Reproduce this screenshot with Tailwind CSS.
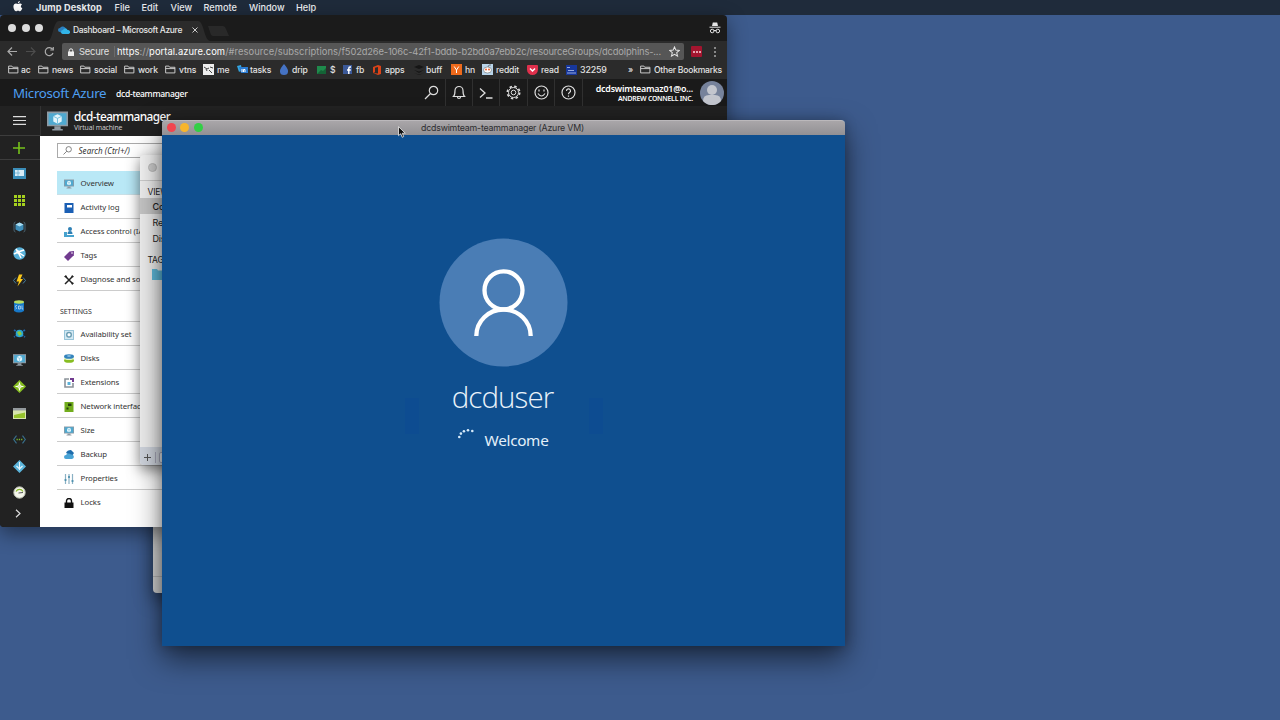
<!DOCTYPE html>
<html lang="en">
  <head>
    <meta charset="UTF-8" />
    <title>Jump Desktop</title>
    <script src="https://cdn.jsdelivr.net/npm/@tailwindcss/browser@4"></script>
  </head>
  <body class="relative w-[1280px] h-[720px] overflow-hidden bg-[#3d5b8d] font-['Inter',sans-serif] text-[9px] whitespace-nowrap">
    <!-- Shared icons -->
    <svg class="hidden">
      <symbol id="folder" viewBox="0 0 12 10"><path d="M.6 8.800V1.200h3.600l.9 1.300h5.800v6.300z M.6 4h10.300" fill="none" stroke="#d8d8d8" stroke-width="1" /></symbol>
      <symbol id="vm" viewBox="0 0 20 18">
        <path d="M0 0h20v14H0z" fill="#8f9aa3" /><path d="M1.500 1.500h17v11h-17z" fill="#4fa9d0" />
        <path d="M7 14h6v2.500h2V18H5v-1.500h2z" fill="#8f9aa3" />
        <path d="M10 2.500l4 2v5l-4 2-4-2v-5z" fill="#e4f5fb" /><path d="M6 4.500l4 2 4-2M10 6.500v5" stroke="#64b7d9" stroke-width=".8" fill="none" />
      </symbol>
    </svg>

    <!-- macOS menu bar -->
    <header class="h-[15px] flex items-center bg-[#1f2b3b] text-[#eef0f3] font-medium text-[9.200px] leading-[15px]">
      <svg class="w-[10px] h-[11px] ml-[13px] mr-[13px] mb-[2px]" viewBox="0 0 20 24" fill="#fff"><path d="M14 0c.2 2.600-1.800 5-4.200 5C9.500 2.500 11.600.3 14 0zM10 6.500c1.200 0 2.400-1.200 4.600-1 1.600.1 3 .8 4 2.200-3.500 2.200-3 6.800.8 8.300-1 3-3 6.500-5.200 6.500-1.700 0-2.200-1-4.200-1s-2.600 1-4.200 1C2.800 22.500 0 17 0 12.500 0 8 2.800 5.600 5.600 5.600c2 0 3.200.9 4.400.9z" /></svg>
      <span class="w-[78.500px] font-bold tracking-[0.1px]">Jump Desktop</span>
      <span class="w-[27px]">File</span>
      <span class="w-[29px]">Edit</span>
      <span class="w-[33px]">View</span>
      <span class="w-[45.500px]">Remote</span>
      <span class="w-[47px] tracking-[-0.05px]">Window</span>
      <span>Help</span>
    </header>

    <!-- Window left behind the others -->
    <div class="absolute left-[153px] top-[400px] w-[200px] h-[193px] rounded-[4px] bg-[#d2d2d2] shadow-[0_6px_18px_rgba(0,0,0,0.5)] flex flex-col justify-end">
      <div class="h-[17px] border-t border-[#b5b5b5]"></div>
    </div>

    <!-- Browser window -->
    <div class="absolute left-0 top-[15px] w-[727px] h-[512px] rounded-[4px] overflow-hidden bg-[#1b1b1b] flex flex-col shadow-[0_6px_20px_rgba(0,0,0,0.45)]">
      <!-- Tabs -->
      <div class="h-[26px] flex items-center text-[#e6e6e6]">
        <div class="flex gap-[5.500px] ml-[8px] w-[44px]">
          <i class="w-[8px] h-[8px] rounded-full bg-[#dcdcdc]"></i><i class="w-[8px] h-[8px] rounded-full bg-[#dcdcdc]"></i><i class="w-[8px] h-[8px] rounded-full bg-[#dcdcdc]"></i>
        </div>
        <div class="relative h-full w-[156px] flex items-center pt-[4px] pl-[6px]">
          <svg class="absolute left-[-4px] top-[6px] w-[162px] h-[20px]" viewBox="0 0 162 20"><path d="M0 20C5 19 5 0 11 0h139c6 0 6 19 12 20z" fill="#2b2b2b" /></svg>
          <svg class="relative w-[12px] h-[9px]" viewBox="0 0 24 18"><path d="M4 12a4 4 0 0 1 0-8 6 6 0 0 1 10-1l5 5-9 8z" fill="#2b7fbf" /><path d="M10 16a4 4 0 0 1 0-8 5 5 0 0 1 9 0 4 4 0 0 1 2 8z" fill="#32b4e8" /></svg>
          <span class="relative ml-[3px] w-[119px] text-[8.500px] font-medium tracking-[-0.33px] word-spacing-normal">Dashboard – Microsoft Azure</span>
          <svg class="relative w-[6px] h-[6px]" viewBox="0 0 6 6"><path d="M.5.5l5 5m0-5l-5 5" stroke="#ccc" /></svg>
        </div>
        <svg class="w-[22px] h-[10px] mt-[6px]" viewBox="0 0 22 10"><path d="M0 0h15q2 0 3 3l3 7H5q-2 0-3-4z" fill="#292929" /></svg>
        <svg class="w-[12px] h-[12px] ml-auto mr-[6px]" viewBox="0 0 12 12" fill="none" stroke="#e5e5e5"><path d="M3 4l.8-3.500h4.400L9 4z" fill="#e5e5e5" stroke="none" /><path d="M.5 5.200h11M5 8.700q1-.8 2 0" /><circle cx="3.200" cy="9" r="1.800" /><circle cx="8.800" cy="9" r="1.800" /></svg>
      </div>
      <!-- Address bar -->
      <div class="h-[21px] flex items-center bg-[#2b2b2b] pl-[7px]">
        <svg class="w-[48px] h-[11px] mr-[7px] shrink-0" viewBox="0 0 48 11" fill="none" stroke="#aaa" stroke-width="1.200"><path d="M10 5.500H1M5 1.500l-4 4 4 4" /><path d="M19 5.500h9M24 1.500l4 4-4 4" stroke="#4d4d4d" /><path d="M45.500 3.200A4 4 0 1 0 46 7M46.300 1v3h-3" /></svg>
        <div class="w-[622px] h-[17px] bg-[#565656] rounded-[2px] flex items-center text-[#a9a9a9] text-[9.400px]">
          <svg class="w-[6px] h-[8px] ml-[6px] mr-[5px]" viewBox="0 0 6 8"><path d="M1.300 4V2.500a1.700 1.700 0 0 1 3.400 0V4" fill="none" stroke="#eee" /><path d="M0 3.500h6V8H0z" fill="#eee" /></svg>
          <span class="w-[35px] pt-px text-[#e0e0e0] tracking-[-0.2px]">Secure</span>
          <span class="w-[3px] h-[11px] border-l border-[#6b6b6b]"></span>
          <span class="w-[552px] pt-px tracking-[0.06px]"><span class="text-white">https</span>://<span class="text-white">portal.azure.com</span>/#resource/subscriptions/<span class="tracking-[-0.16px]">f502d26e-106c-42f1-bddb-b2bd0a7ebb2c/resourceGroups/dcdolphins-...</span></span>
          <svg class="w-[11px] h-[11px]" viewBox="0 0 24 24" fill="none" stroke="#e6e6e6" stroke-width="2.200"><path d="M12 2l3 7 7.500.6-5.700 5 1.800 7.400L12 18l-6.600 4 1.800-7.400-5.700-5L9 9z" /></svg>
        </div>
        <div class="ml-[7px] w-[11px] h-[11px] bg-[#a3152f] rounded-[1px] flex items-center justify-center gap-px"><i class="w-[2px] h-[2px] bg-[#e4a3ae]"></i><i class="w-[2px] h-[2px] bg-[#e4a3ae]"></i><i class="w-[2px] h-[2px] bg-[#e4a3ae]"></i></div>
        <div class="ml-[12px] flex flex-col gap-[2px]"><i class="w-[2px] h-[2px] bg-[#888]"></i><i class="w-[2px] h-[2px] bg-[#888]"></i><i class="w-[2px] h-[2px] bg-[#888]"></i></div>
      </div>
      <!-- Bookmarks -->
      <div class="h-[17px] flex items-center bg-[#2b2b2b] pl-[8px] pb-[1px] text-[#e2e2e2] text-[8.600px] tracking-[-0.16px] font-medium">
        <div class="w-[30px] flex items-center gap-[2px]"><svg class="w-[11px] h-[9px]"><use href="#folder" /></svg>ac</div>
        <div class="w-[42px] flex items-center gap-[3px]"><svg class="w-[11px] h-[9px]"><use href="#folder" /></svg>news</div>
        <div class="w-[44px] flex items-center gap-[3px]"><svg class="w-[11px] h-[9px]"><use href="#folder" /></svg>social</div>
        <div class="w-[41px] flex items-center gap-[3px]"><svg class="w-[11px] h-[9px]"><use href="#folder" /></svg>work</div>
        <div class="w-[38px] flex items-center gap-[3px]"><svg class="w-[11px] h-[9px]"><use href="#folder" /></svg>vtns</div>
        <div class="w-[34px] flex items-center gap-[3px]"><svg class="w-[11px] h-[11px] bg-[#eee]" viewBox="0 0 11 11"><path d="M1 3l3 2 2-1M6 6l3 3M7 3l3 1M3 5l1 2" stroke="#444" fill="none" /></svg>me</div>
        <div class="w-[42px] flex items-center gap-[2px]"><svg class="w-[11px] h-[9px]" viewBox="0 0 11 9"><path d="M0 1l4-1 1 5-3 2z" fill="#33a6e0" /><path d="M2 2h9v6H4z" fill="#2b7cd3" /><path d="M5 4v3M6.500 7V4.500h1.500V7" stroke="#fff" fill="none" /></svg>tasks</div>
        <div class="w-[38px] flex items-center gap-[3px]"><svg class="w-[10px] h-[11px]" viewBox="0 0 10 11"><path d="M5 0q4.500 5 4 7.500A4 3.500 0 0 1 1 7.500Q.5 5 5 0z" fill="#4573c4" /></svg>drip</div>
        <div class="w-[26px] flex items-center gap-[4px]"><svg class="w-[9px] h-[8px]" viewBox="0 0 9 8"><path d="M0 0h9v8H0z" fill="#1f8a4c" /><path d="M0 8l4-4 2 1 3-3v6z" fill="#146336" /></svg>$</div>
        <div class="w-[29px] flex items-center gap-[4px]"><svg class="w-[9px] h-[9px]" viewBox="0 0 9 9"><path d="M0 0h9v9H0z" fill="#3b5998" /><path d="M8 2H7q-1.200 0-1.200 1.300V9M4 5h3.800" fill="none" stroke="#fff" stroke-width="1.400" /></svg>fb</div>
        <div class="w-[42px] flex items-center gap-[3px]"><svg class="w-[10px] h-[10px]" viewBox="0 0 10 10"><path d="M1 2l5-2 3 1v8l-3 1-5-2 5 .5V2L3 2.800v4.500L1 8z" fill="#dc4318" /></svg>apps</div>
        <div class="w-[37px] flex items-center gap-[2px]"><svg class="w-[10px] h-[10px]" viewBox="0 0 10 10" fill="#161616"><path d="M0 2l5-2 5 2-5 2zM0 5l5 1.500L10 5 5 8zM0 8l5 1.500L10 8l-5 2z" /></svg>buff</div>
        <div class="w-[31px] flex items-center gap-[3px]"><svg class="w-[11px] h-[11px]" viewBox="0 0 11 11"><path d="M0 0h11v11H0z" fill="#ee6a1c" /><path d="M3.200 2.500l2.300 3.500 2.300-3.500M5.500 6v3" fill="none" stroke="#fff" /></svg>hn</div>
        <div class="w-[45px] flex items-center gap-[3px]"><svg class="w-[11px] h-[11px]" viewBox="0 0 11 11"><path d="M0 0h11v11H0z" fill="#b8d4ea" /><ellipse cx="5.500" cy="6" rx="4" ry="3" fill="#fff" stroke="#555" stroke-width=".5" /><circle cx="4" cy="5.500" r=".9" fill="#f0501e" /><circle cx="7" cy="5.500" r=".9" fill="#f0501e" /><path d="M6 3l1-2h2" stroke="#444" fill="none" stroke-width=".6" /></svg>reddit</div>
        <div class="w-[39px] flex items-center gap-[3px]"><svg class="w-[11px] h-[10px]" viewBox="0 0 11 10"><path d="M0 1q0-1 1-1h9q1 0 1 1v3.500a5.500 5.500 0 0 1-11 0z" fill="#e0304c" /><path d="M3 3.500l2.500 2.500L8 3.500" fill="none" stroke="#fff" stroke-width="1.500" /></svg>read</div>
        <div class="w-[62px] flex items-center gap-[3px] text-[8.900px]"><svg class="w-[11px] h-[10px]" viewBox="0 0 11 10"><path d="M0 0h11v10H0z" fill="#17379b" /><path d="M1 2.500h3M2 5.500h6M1 8h9" stroke="#b9c6ee" stroke-width=".8" /></svg>32259</div>
        <span class="w-[12px]">»</span>
        <div class="flex items-center gap-[3px] tracking-[-0.25px]"><svg class="w-[11px] h-[9px]"><use href="#folder" /></svg>Other Bookmarks</div>
      </div>

      <!-- Azure top bar -->
      <div class="h-[27px] shrink-0 flex items-center bg-[#1a1a1a] pl-[13px] pr-[3px] text-white font-['Noto_Sans',sans-serif]">
        <span class="w-[103px] pt-[2px] text-[13.300px] tracking-[-0.32px] text-[#4e9ff2]">Microsoft Azure</span>
        <span class="pt-[3px] text-[8.600px] font-medium tracking-[-0.31px]">dcd-teammanager</span>
        <div class="ml-auto flex h-full text-[#ddd]">
          <div class="w-[28px] flex items-center justify-center border-r border-[#303030]"><svg class="w-[15px] h-[15px]" viewBox="0 0 15 15" fill="none" stroke="#ddd" stroke-width="1.200"><circle cx="9.500" cy="5.500" r="4.200" /><path d="M6.500 8.500L1 14" /></svg></div>
          <div class="w-[27px] flex items-center justify-center border-r border-[#303030]"><svg class="w-[14px] h-[15px]" viewBox="0 0 14 15" fill="none" stroke="#ddd" stroke-width="1.200"><path d="M1.500 11.500q1.500-1.500 1.500-6a4 4 0 0 1 8 0q0 4.500 1.500 6zM5.500 12a1.500 1.500 0 0 0 3 0" /></svg></div>
          <div class="w-[27px] flex items-center justify-center border-r border-[#303030]"><svg class="w-[14px] h-[12px]" viewBox="0 0 14 12" fill="none" stroke="#ddd" stroke-width="1.300"><path d="M1 1.500L6 6l-5 4.500M7 11h6.500" /></svg></div>
          <div class="w-[28px] flex items-center justify-center border-r border-[#303030]"><svg class="w-[15px] h-[15px]" viewBox="0 0 15 15" fill="none" stroke="#ddd"><circle cx="7.500" cy="7.500" r="2.300" /><circle cx="7.500" cy="7.500" r="5" /><circle cx="7.500" cy="7.500" r="6.200" stroke-width="1.600" stroke-dasharray="2.500 2.370" /></svg></div>
          <div class="w-[27px] flex items-center justify-center border-r border-[#303030]"><svg class="w-[15px] h-[15px]" viewBox="0 0 15 15" fill="none" stroke="#ddd" stroke-width="1.200"><circle cx="7.500" cy="7.500" r="6.500" /><path d="M4 8.500q3.500 5 7 0M5 4.500v2M10 4.500v2" /></svg></div>
          <div class="w-[28px] flex items-center justify-center border-r border-[#303030]"><svg class="w-[15px] h-[15px]" viewBox="0 0 15 15" fill="none" stroke="#ddd" stroke-width="1.200"><circle cx="7.500" cy="7.500" r="6.500" /><path d="M5.500 6a2 2 0 1 1 3 1.600q-1 .6-1 1.700M7.500 10.500v1.200" /></svg></div>
        </div>
        <div class="w-[110px] text-right leading-[10px] pt-[2px]">
          <div class="text-[8.900px] font-semibold tracking-[-0.2px]">dcdswimteamaz01@o...</div>
          <div class="text-[6.900px] font-semibold tracking-[-0.25px]">ANDREW CONNELL INC.</div>
        </div>
        <svg class="w-[24px] h-[24px] ml-[7px]" viewBox="0 0 24 24"><circle cx="12" cy="12" r="12" fill="#76829b" /><circle cx="12" cy="9" r="5" fill="#c3c6ce" /><path d="M3 20q0-6 6-6h6q6 0 6 6a12 12 0 0 1-18 0z" fill="#c3c6ce" /></svg>
      </div>

      <div class="flex flex-1">
        <!-- Azure rail -->
        <nav class="w-[40px] pr-[2px] bg-[#222] flex flex-col items-center">
          <div class="w-[40px] ml-[2px] pr-[2px] h-[30px] flex items-center justify-center border-b border-[#3d3d3d]"><svg class="w-[13px] h-[9px]" viewBox="0 0 13 9"><path d="M0 .6h13M0 4.500h13M0 8.400h13" stroke="#ddd" stroke-width="1.100" /></svg></div>
          <div class="w-[40px] ml-[2px] pr-[2px] h-[24px] mb-[0.500px] flex items-center justify-center border-b border-[#3d3d3d]"><svg class="w-[12px] h-[12px]" viewBox="0 0 12 12"><path d="M6 0v12M0 6h12" stroke="#76c21b" stroke-width="1.600" /></svg></div>
          <div class="h-[26.600px] flex items-center"><svg class="w-[13px] h-[11px]" viewBox="0 0 13 11"><path d="M0 0h13v11H0z" fill="#3b8db8" /><path d="M2 2h9v6H2z" fill="#d9edf7" /><path d="M5 2v6M2 5h5" stroke="#6fb0d0" stroke-width=".8" /></svg></div>
          <div class="h-[26.600px] flex items-center"><svg class="w-[11px] h-[11px]" viewBox="0 0 11 11"><path d="M0 1.500h11M0 5.500h11M0 9.500h11" stroke="#a5d01f" stroke-width="3" stroke-dasharray="3 1" /></svg></div>
          <div class="h-[26.600px] flex items-center"><svg class="w-[13px] h-[12px]" viewBox="0 0 13 12"><path d="M2.500 1Q1 1 1 3v6q0 2 1.500 2M10.500 1Q12 1 12 3v6q0 2-1.500 2" fill="none" stroke="#49606e" /><path d="M6.500 1.500l4 2v5l-4 2-4-2v-5z" fill="#3f8db8" /><path d="M6.500 1.500l4 2-4 2-4-2z" fill="#a9ddf2" /></svg></div>
          <div class="h-[26.600px] flex items-center"><svg class="w-[13px] h-[13px]" viewBox="0 0 13 13"><circle cx="6.500" cy="6.500" r="6.200" fill="#57b0d8" /><path d="M3 2l2 3 6-2M5 5l3 6M1 7l4-2 6 4" stroke="#fff" fill="none" stroke-width="1.500" /><circle cx="5" cy="5" r="1.700" fill="#fff" /></svg></div>
          <div class="h-[26.600px] flex items-center"><svg class="w-[13px] h-[13px]" viewBox="0 0 13 13"><path d="M3 3.500L.5 6.500l2.500 3M10 3.500l2.500 3-2.500 3" fill="none" stroke="#477fa0" /><path d="M6 .5h3.500L7.500 5H10l-5.500 7.500L6 7.500H3.500z" fill="#fbc81b" /></svg></div>
          <div class="h-[26.600px] flex items-center"><svg class="w-[10px] h-[13px]" viewBox="0 0 10 13"><path d="M0 2h10v9q-5 3-10 0z" fill="#1778c8" /><ellipse cx="5" cy="2" rx="5" ry="1.700" fill="#b8dd62" /><path d="M3 5.500q-2 0-1.500 1t1 1.500-1 1M4.500 6h1.800v3H4.500zM8 5.500V9h1.200" fill="none" stroke="#d8ebf9" stroke-width=".7" /></svg></div>
          <div class="h-[26.600px] flex items-center"><svg class="w-[13px] h-[13px]" viewBox="0 0 13 13"><path d="M1 3l11 7M12 3L1 10" stroke="#1f65ad" stroke-width="1.800" stroke-dasharray="2 1" /><circle cx="6.500" cy="6.500" r="3.800" fill="#29a6d3" /><path d="M4 5l3-1 2 3-3 2z" fill="#8cc63f" /></svg></div>
          <div class="h-[26.600px] flex items-center"><svg class="w-[13px] h-[12px]"><use href="#vm" /></svg></div>
          <div class="h-[26.600px] flex items-center"><svg class="w-[13px] h-[13px]" viewBox="0 0 13 13"><path d="M6.500 0L13 6.500 6.500 13 0 6.500z" fill="#86bd20" /><path d="M6.500 2.500v8M2.500 6.500h8" stroke="#fff" stroke-width="1.200" /><circle cx="6.500" cy="6.500" r="1.800" fill="#d8f09c" stroke="#fff" stroke-width=".7" /></svg></div>
          <div class="h-[26.600px] flex items-center"><svg class="w-[13px] h-[11px]" viewBox="0 0 13 11"><path d="M0 0h13v11H0z" fill="#d7e5ad" /><path d="M0 0h13v2.500H0z" fill="#949a9d" /><path d="M1 7l11-2.500V10H1z" fill="#95c22b" /></svg></div>
          <div class="h-[26.600px] flex items-center"><svg class="w-[13px] h-[9px]" viewBox="0 0 13 9"><path d="M3.500.7L.7 4.500l2.800 3.800M9.500.7l2.800 3.800-2.800 3.800" fill="none" stroke="#39718e" stroke-width="1.100" /><path d="M3.500 4.500h6" stroke="#77b72a" stroke-width="1.500" stroke-dasharray="1.300 1" /></svg></div>
          <div class="h-[26.600px] flex items-center"><svg class="w-[13px] h-[13px]" viewBox="0 0 13 13"><path d="M6.500 0L13 6.500 6.500 13 0 6.500z" fill="#5bb4db" /><path d="M6.500 2v8M3.500 6l3 3 3-3" fill="none" stroke="#e8f7fd" stroke-width="1.100" /></svg></div>
          <div class="h-[26.600px] flex items-center"><svg class="w-[13px] h-[13px]" viewBox="0 0 13 13"><circle cx="6.500" cy="6.500" r="5.700" fill="#f5f6ec" stroke="#b9bcae" /><path d="M3 5.500a4 4 0 0 1 7 0" fill="none" stroke="#8bb92f" stroke-width="1.200" /><path d="M5.500 7L10 6.500" stroke="#555" /></svg></div>
          <svg class="w-[6px] h-[9px] mt-[3px] mr-[2px]" viewBox="0 0 6 9"><path d="M1 .7l4 3.800-4 3.800" fill="none" stroke="#ddd" stroke-width="1.200" /></svg>
        </nav>

        <div class="flex-1 flex flex-col font-['Noto_Sans',sans-serif]">
          <!-- Blade title -->
          <div class="h-[30px] bg-[#222] flex items-center pl-[6px] border-l border-[#333] text-white">
            <svg class="w-[21px] h-[20px]"><use href="#vm" /></svg>
            <div class="ml-[6px] pt-[2px]">
              <div class="text-[11.800px] leading-[11px] font-medium tracking-[-0.56px]">dcd-teammanager</div>
              <div class="text-[6.800px] leading-[11px] tracking-[-0.12px] text-[#ccc]">Virtual machine</div>
            </div>
          </div>
          <!-- Resource menu -->
          <div class="flex-1 bg-white pl-[17px] pt-[7px] text-[#333] text-[7.800px] tracking-[-0.08px]">
            <div class="w-[200px] h-[15px] border border-[#aaa] flex items-center pl-[5px] mb-[13px]">
              <svg class="w-[9px] h-[9px]" viewBox="0 0 9 9" fill="none" stroke="#777" stroke-width=".9"><circle cx="5.700" cy="3.300" r="2.700" /><path d="M3.800 5.200L.5 8.500" /></svg>
              <span class="ml-[6.500px] italic text-[8px] tracking-[0.05px]">Search (Ctrl+/)</span>
            </div>
            <ul class="w-[200px]">
              <li class="h-[24px] flex items-center gap-[6.500px] pt-[2px] pl-[7px] bg-[#b9e8f6] border-b border-[#c9dfe6]"><svg class="w-[10px] h-[10px]"><use href="#vm" /></svg>Overview</li>
              <li class="h-[24px] flex items-center gap-[6.500px] pt-[2px] pl-[7px] border-b border-[#ccc]"><svg class="w-[10px] h-[10px]" viewBox="0 0 10 10"><path d="M.5 0h9v10h-9z" fill="#1b5fb4" /><path d="M3 2h5v2.500H3z" fill="#fff" /></svg>Activity log</li>
              <li class="h-[24px] flex items-center gap-[6.500px] pt-[2px] pl-[7px] border-b border-[#ccc]"><svg class="w-[10px] h-[10px]" viewBox="0 0 10 10" fill="#2e80b5"><circle cx="6" cy="2" r="2" /><path d="M3.500 7q0-3 2.500-3t2.500 3z" /><path d="M0 5h3v3h7v2H0z" fill="#47a2ce" /></svg>Access control (IAM)</li>
              <li class="h-[24px] flex items-center gap-[6.500px] pt-[2px] pl-[7px] border-b border-[#ccc]"><svg class="w-[10px] h-[10px]" viewBox="0 0 10 10"><path d="M5.500.5L10 0l-.2 4.200L4 10 0 6z" fill="#713b8f" /><circle cx="8" cy="2" r=".8" fill="#fff" /></svg>Tags</li>
              <li class="h-[24px] flex items-center gap-[6.500px] pt-[2px] pl-[7px] border-b border-[#ccc]"><svg class="w-[10px] h-[10px]" viewBox="0 0 10 10"><path d="M1 1l8 8M9 1L1 9" stroke="#222" stroke-width="1.500" /><path d="M0 2l2-2 1.500 2.500zM7 2.500L8 0l2 2zM7 7l3 1-2 2z" fill="#222" /></svg>Diagnose and solve problems</li>
            </ul>
            <div class="h-[31px] pt-[16px] pl-[3px] text-[7px] leading-[10px] w-[200px] border-b border-[#ccc]">SETTINGS</div>
            <ul class="w-[200px]">
              <li class="h-[24px] flex items-center gap-[6.500px] pt-[2px] pl-[7px] border-b border-[#ccc]"><svg class="w-[10px] h-[10px]" viewBox="0 0 10 10"><path d="M.5.5h9v9h-9z" fill="#d3e8f2" stroke="#4696ba" stroke-dasharray="1 1" /><circle cx="5" cy="4.700" r="3" fill="#6a9cb2" /><path d="M5 3l1.500 1v1.500L5 6.500l-1.500-1V4z" fill="#fff" /></svg>Availability set</li>
              <li class="h-[24px] flex items-center gap-[6.500px] pt-[2px] pl-[7px] border-b border-[#ccc]"><svg class="w-[10px] h-[9px]" viewBox="0 0 10 9"><ellipse cx="5" cy="6.500" rx="5" ry="2.300" fill="#87bd22" /><ellipse cx="5" cy="4.300" rx="5" ry="1.800" fill="#e5f3c9" /><ellipse cx="5" cy="2.500" rx="5" ry="2.300" fill="#3484bd" /><ellipse cx="5" cy="2" rx="2" ry=".7" fill="#9dcdeb" /></svg>Disks</li>
              <li class="h-[24px] flex items-center gap-[6.500px] pt-[2px] pl-[7px] border-b border-[#ccc]"><svg class="w-[10px] h-[10px]" viewBox="0 0 10 10"><path d="M5 1H1v8h8V5" fill="none" stroke="#8a9299" stroke-width="1.600" /><path d="M6 0h4v4H8V2H6z" fill="#713b8f" /><path d="M3.500 4h3v3h-3z" fill="#5bb2da" /></svg>Extensions</li>
              <li class="h-[24px] flex items-center gap-[6.500px] pt-[2px] pl-[7px] border-b border-[#ccc]"><svg class="w-[10px] h-[10px]" viewBox="0 0 10 10"><path d="M.5 0h9v10h-9z" fill="#72ad1d" /><path d="M4 1.500h3.500v2.500H4zM2.500 5.500h2v2h-2z" fill="#24410c" /></svg>Network interfaces</li>
              <li class="h-[24px] flex items-center gap-[6.500px] pt-[2px] pl-[7px] border-b border-[#ccc]"><svg class="w-[10px] h-[10px]"><use href="#vm" /></svg>Size</li>
              <li class="h-[24px] flex items-center gap-[6.500px] pt-[2px] pl-[7px] border-b border-[#ccc]"><svg class="w-[10px] h-[9px]" viewBox="0 0 10 9"><path d="M2 3q1-3 5-3l3 3-2 3z" fill="#1f6dac" /><path d="M2 9a2 2 0 0 1 0-4 3 3 0 0 1 5-.5A2.300 2.300 0 0 1 8 9z" fill="#49a3d5" /></svg>Backup</li>
              <li class="h-[24px] flex items-center gap-[6.500px] pt-[2px] pl-[7px] border-b border-[#ccc]"><svg class="w-[10px] h-[10px]" viewBox="0 0 10 10"><path d="M1.500 0v10M5 0v10M8.500 0v10" stroke="#8ab1c4" stroke-width="1.200" /><path d="M.5 6h2M4 3h2M7.500 7h2" stroke="#3d87a8" stroke-width="1.500" /></svg>Properties</li>
              <li class="h-[24px] flex items-center gap-[6.500px] pt-[2px] pl-[7px]"><svg class="w-[10px] h-[10px]" viewBox="0 0 10 10"><path d="M2.500 5V3a2.500 2.500 0 0 1 5 0v2" fill="none" stroke="#111" stroke-width="1.400" /><path d="M.5 4.500h9V10h-9z" fill="#111" /></svg>Locks</li>
            </ul>
          </div>
        </div>
      </div>
    </div>

    <!-- Jump Desktop connection list -->
    <div class="absolute left-[140px] top-[155px] w-[200px] h-[310px] rounded-[4px] overflow-hidden bg-[#efefef] text-[#222] shadow-[0_5px_14px_rgba(0,0,0,0.5)] flex flex-col font-['Inter',sans-serif] tracking-[-0.15px]">
      <div class="h-[26px] pl-[8px] flex items-center bg-[#f4f4f4] border-b border-[#ccc]"><i class="w-[9px] h-[9px] rounded-full bg-[#cfcfcf] border border-[#bdbdbd]"></i></div>
      <div class="pt-[3px] pl-[7.500px] h-[17px] leading-[16px] text-[8.500px]">VIEW</div>
      <div class="pl-[12.500px] h-[16px] leading-[17px] bg-[#c6c6c6] font-medium">Computers</div>
      <div class="pl-[12.500px] h-[16px] leading-[17px]">Recent</div>
      <div class="pl-[12.500px] h-[16px] leading-[17px]">Discovered</div>
      <div class="pl-[7.500px] pt-[6px] h-[23px] leading-[16px] text-[8.500px]">TAGS</div>
      <svg class="ml-[12px] w-[14px] h-[11px] shrink-0" viewBox="0 0 14 11"><path d="M0 0h5l1 1.500h8V11H0z" fill="#5fbbdd" /></svg>
      <div class="mt-auto h-[18px] bg-[#d0d5de] flex items-center pt-[2px] pl-[4px]">
        <svg class="w-[7px] h-[7px]" viewBox="0 0 7 7"><path d="M3.500 0v7M0 3.500h7" stroke="#555" /></svg>
        <i class="ml-[4px] w-px h-[11px] bg-[#aab]"></i>
        <i class="ml-[3px] w-[30px] h-[11px] border border-[#aab] rounded-[2px] bg-[#e8eaee]"></i>
      </div>
    </div>

    <!-- Remote session -->
    <div class="absolute left-[162px] top-[120px] w-[683px] h-[526px] rounded-t-[4px] bg-[#0f4f8f] shadow-[0_13px_30px_rgba(0,0,0,0.55),0_0_12px_rgba(0,0,0,0.25)] flex flex-col items-center">
      <div class="relative w-full h-[15px] rounded-t-[4px] bg-linear-to-b from-[#a9a6a9] to-[#929094] border-t border-[#bbb8bb] text-center leading-[14px] text-[8.800px] tracking-[-0.18px] text-[#2d2d2f]">
        <div class="absolute left-[4.500px] top-[2px] flex gap-[4.500px]">
          <i class="w-[9px] h-[9px] rounded-full bg-[#f1454f]"></i><i class="w-[9px] h-[9px] rounded-full bg-[#f7b52c]"></i><i class="w-[9px] h-[9px] rounded-full bg-[#32cf45]"></i>
        </div>
        <span class="mr-[2px]">dcdswimteam-teammanager (Azure VM)</span>
      </div>
      <svg class="mt-[103px] w-[129px] h-[129px]" viewBox="0 0 129 129">
        <circle cx="64.500" cy="64.500" r="64" fill="#4a7db5" />
        <g fill="none" stroke="#fff" stroke-width="4.300"><circle cx="64.500" cy="52.300" r="19" /><path d="M37.300 98a27.200 26.500 0 0 1 54.400 0" /></g>
      </svg>
      <div class="mt-[9px] mr-[2px] h-[42px] leading-[42px] text-[29.500px] text-[#e9f2fa] font-light font-['Open_Sans',sans-serif] tracking-[-0.9px]">dcduser</div>
      <div class="relative mt-[10px] h-[24px] leading-[24px] pl-[26px] text-[15.300px] tracking-[-0.3px] text-[#e3f0fa] font-['Noto_Sans',sans-serif]">
        <svg class="absolute left-[-1px] top-[-2px] w-[18px] h-[14px]" viewBox="0 0 18 14" fill="#d5eafa"><circle cx="1.300" cy="11" r="1.300" /><circle cx="2.900" cy="7.600" r="1.300" /><circle cx="5.900" cy="5.300" r="1.300" /><circle cx="10" cy="4.300" r="1.300" /><circle cx="14.300" cy="5" r="1.300" /></svg>
        Welcome
      </div>
      <i class="absolute left-[243px] top-[278px] w-[14px] h-[36px] bg-[#0d4c91]"></i>
      <i class="absolute left-[427px] top-[278px] w-[14px] h-[36px] bg-[#0d4c91]"></i>
    </div>

    <!-- Pointer -->
    <svg class="absolute left-[398px] top-[126px] w-[8px] h-[12px]" viewBox="0 0 8 12"><path d="M.5.700v9l2.200-2 1.500 3.600 1.500-.7L4.300 7.200h3z" fill="#111" stroke="#eee" stroke-width=".8" /></svg>
  </body>
</html>
